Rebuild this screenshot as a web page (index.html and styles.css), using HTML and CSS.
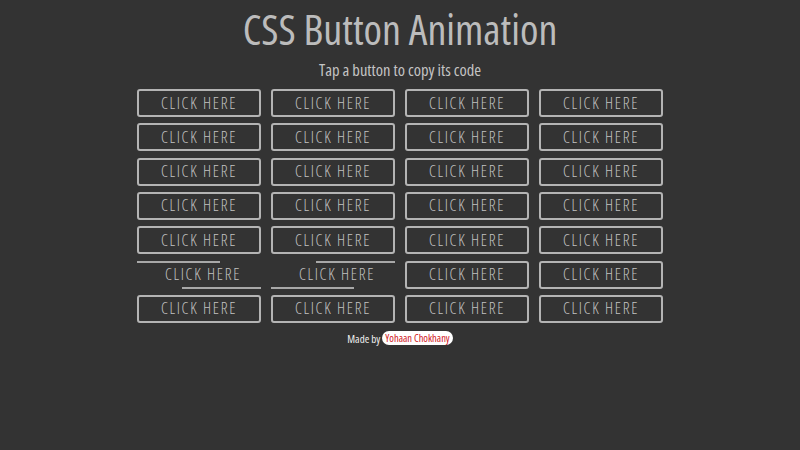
FILE: index.html
```html
<!DOCTYPE html>
<html>
<head>
<meta charset="utf-8">
<link rel="stylesheet" href="styles.css">
</head>
<body>
<header class="head">
  <h1 class="title">CSS Button Animation</h1>
  <p class="sub">Tap a button to copy its code</p>
</header>
<main class="grid">
  <button class="btn">CLICK HERE</button><button class="btn">CLICK HERE</button><button class="btn">CLICK HERE</button><button class="btn">CLICK HERE</button>
  <button class="btn">CLICK HERE</button><button class="btn">CLICK HERE</button><button class="btn">CLICK HERE</button><button class="btn">CLICK HERE</button>
  <button class="btn">CLICK HERE</button><button class="btn">CLICK HERE</button><button class="btn">CLICK HERE</button><button class="btn">CLICK HERE</button>
  <button class="btn">CLICK HERE</button><button class="btn">CLICK HERE</button><button class="btn">CLICK HERE</button><button class="btn">CLICK HERE</button>
  <button class="btn">CLICK HERE</button><button class="btn">CLICK HERE</button><button class="btn">CLICK HERE</button><button class="btn">CLICK HERE</button>
  <button class="btn btn-lines btn-lines-a">CLICK HERE</button><button class="btn btn-lines btn-lines-b">CLICK HERE</button><button class="btn">CLICK HERE</button><button class="btn">CLICK HERE</button>
  <button class="btn">CLICK HERE</button><button class="btn">CLICK HERE</button><button class="btn">CLICK HERE</button><button class="btn">CLICK HERE</button>
</main>
<footer class="foot">
  <span class="made">Made by</span>
  <span class="author">Yohaan Chokhany</span>
</footer>
</body>
</html>
```
FILE: styles.css
```css
html, body {
  margin: 0;
  padding: 0;
  background: #333333;
  height: 100%;
}
body {
  font-family: "Open Sans", "DejaVu Sans Condensed", sans-serif;
  font-stretch: 75%;
  color: #bdbdbd;
}
.head {
  display: flex;
  flex-direction: column;
  align-items: center;
  padding-top: 4px;
}
.title {
  margin: 0;
  font-size: 42px;
  font-weight: 400;
  font-stretch: 75%;
  letter-spacing: 0;
  line-height: 50px;
  color: #bcbcbc;
}
.sub {
  margin: 6px 0 0 0;
  font-size: 16.5px;
  font-stretch: 75%;
  line-height: 20px;
  color: #c4c4c4;
}
.grid {
  width: 526px;
  margin: 9px auto 0;
  display: grid;
  grid-template-columns: repeat(4, 124px);
  grid-auto-rows: 28px;
  column-gap: 10px;
  row-gap: 6.33px;
}
.btn {
  position: relative;
  box-sizing: border-box;
  height: 28px;
  padding: 0;
  background: transparent;
  border: 2px solid #b4b4b4;
  border-radius: 3px;
  color: #c2c2c2;
  font-family: "Open Sans", "DejaVu Sans Condensed", sans-serif;
  font-stretch: 75%;
  font-weight: 300;
  font-size: 16px;
  letter-spacing: 1.7px;
  line-height: 23px;
  text-align: center;
}
.btn-lines {
  border-color: transparent;
  border-radius: 0;
  padding-left: 8px;
}
.btn-lines::before,
.btn-lines::after {
  content: "";
  position: absolute;
  height: 2px;
  background: #a8a8a8;
}
.btn-lines-a::before {
  top: -2px;
  left: -2px;
  width: 83px;
}
.btn-lines-a::after {
  bottom: -2px;
  right: -2px;
  width: 79px;
}
.btn-lines-b::before {
  top: -2px;
  right: -2px;
  width: 79px;
}
.btn-lines-b::after {
  bottom: -2px;
  left: -2px;
  width: 83px;
}
.foot {
  display: flex;
  justify-content: center;
  align-items: center;
  gap: 2px;
  margin-top: 8px;
  font-family: "Open Sans", sans-serif;
  font-stretch: 75%;
  font-size: 11px;
}
.made {
  color: #f0f0f0;
  font-weight: 500;
}
.author {
  background: #ffffff;
  color: #d0141b;
  border-radius: 7px;
  padding: 0 3px;
  font-size: 10.5px;
  line-height: 14px;
}
```
